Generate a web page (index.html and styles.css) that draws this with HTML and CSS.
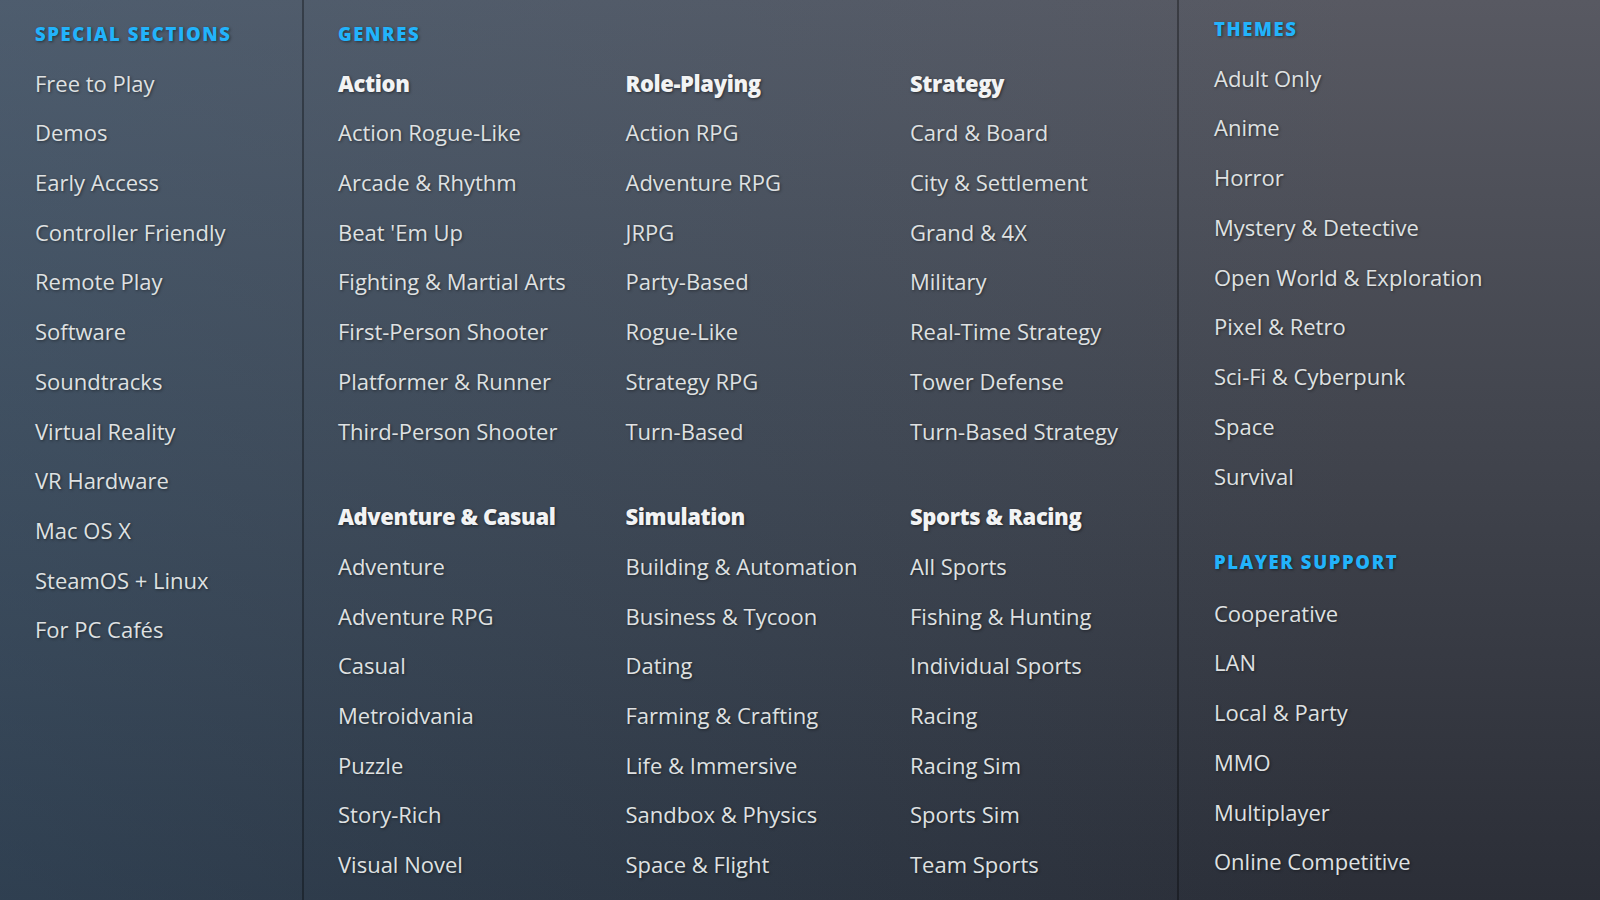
FILE: index.html
```html
<!DOCTYPE html>
<html lang="en">
<head>
<meta charset="utf-8">
<title>Store Menu</title>
<link rel="stylesheet" href="styles.css">
</head>
<body>
<div class="menu">
  <div class="col col-special">
    <div class="section-title">Special Sections</div>
    <ul class="list">
      <li>Free to Play</li>
      <li>Demos</li>
      <li>Early Access</li>
      <li>Controller Friendly</li>
      <li>Remote Play</li>
      <li>Software</li>
      <li>Soundtracks</li>
      <li>Virtual Reality</li>
      <li>VR Hardware</li>
      <li>Mac OS X</li>
      <li>SteamOS + Linux</li>
      <li>For PC Cafés</li>
    </ul>
  </div>
  <div class="col col-genres">
    <div class="section-title">Genres</div>
    <div class="genre-grid">
      <div class="group">
        <div class="group-title">Action</div>
        <ul class="list">
          <li>Action Rogue-Like</li>
          <li>Arcade &amp; Rhythm</li>
          <li>Beat 'Em Up</li>
          <li>Fighting &amp; Martial Arts</li>
          <li>First-Person Shooter</li>
          <li>Platformer &amp; Runner</li>
          <li>Third-Person Shooter</li>
        </ul>
      </div>
      <div class="group">
        <div class="group-title">Role-Playing</div>
        <ul class="list">
          <li>Action RPG</li>
          <li>Adventure RPG</li>
          <li>JRPG</li>
          <li>Party-Based</li>
          <li>Rogue-Like</li>
          <li>Strategy RPG</li>
          <li>Turn-Based</li>
        </ul>
      </div>
      <div class="group">
        <div class="group-title">Strategy</div>
        <ul class="list">
          <li>Card &amp; Board</li>
          <li>City &amp; Settlement</li>
          <li>Grand &amp; 4X</li>
          <li>Military</li>
          <li>Real-Time Strategy</li>
          <li>Tower Defense</li>
          <li>Turn-Based Strategy</li>
        </ul>
      </div>
      <div class="group">
        <div class="group-title">Adventure &amp; Casual</div>
        <ul class="list">
          <li>Adventure</li>
          <li>Adventure RPG</li>
          <li>Casual</li>
          <li>Metroidvania</li>
          <li>Puzzle</li>
          <li>Story-Rich</li>
          <li>Visual Novel</li>
        </ul>
      </div>
      <div class="group">
        <div class="group-title">Simulation</div>
        <ul class="list">
          <li>Building &amp; Automation</li>
          <li>Business &amp; Tycoon</li>
          <li>Dating</li>
          <li>Farming &amp; Crafting</li>
          <li>Life &amp; Immersive</li>
          <li>Sandbox &amp; Physics</li>
          <li>Space &amp; Flight</li>
        </ul>
      </div>
      <div class="group">
        <div class="group-title">Sports &amp; Racing</div>
        <ul class="list">
          <li>All Sports</li>
          <li>Fishing &amp; Hunting</li>
          <li>Individual Sports</li>
          <li>Racing</li>
          <li>Racing Sim</li>
          <li>Sports Sim</li>
          <li>Team Sports</li>
        </ul>
      </div>
    </div>
  </div>
  <div class="col col-themes">
    <div class="section-title">Themes</div>
    <ul class="list">
      <li>Adult Only</li>
      <li>Anime</li>
      <li>Horror</li>
      <li>Mystery &amp; Detective</li>
      <li>Open World &amp; Exploration</li>
      <li>Pixel &amp; Retro</li>
      <li>Sci-Fi &amp; Cyberpunk</li>
      <li>Space</li>
      <li>Survival</li>
    </ul>
    <div class="section-title section-gap">Player Support</div>
    <ul class="list">
      <li>Cooperative</li>
      <li>LAN</li>
      <li>Local &amp; Party</li>
      <li>MMO</li>
      <li>Multiplayer</li>
      <li>Online Competitive</li>
    </ul>
  </div>
</div>
</body>
</html>
```

FILE: styles.css
```css
html, body {
  margin: 0;
  padding: 0;
  height: 100%;
  overflow: hidden;
}

body {
  font-family: "Open Sans", "Noto Sans", sans-serif;
  color: #dfe1e2;
  background-color: #3b4350;
  background-image:
    linear-gradient(to right, rgba(56, 100, 135, 0.32) 0%, rgba(56, 100, 135, 0.16) 45%, rgba(56, 100, 135, 0) 85%),
    linear-gradient(to bottom, #585962 0%, #43464f 45%, #2b2e37 100%);
}

.menu {
  display: flex;
  height: 900px;
  box-sizing: border-box;
}

.col {
  box-sizing: border-box;
  padding-top: 9px;
}

.col-special {
  width: 302px;
  padding-left: 35px;
}

.col-genres {
  width: 875px;
  padding-left: 34px;
  border-left: 2px solid rgba(0, 0, 0, 0.32);
}

.col-themes {
  flex: 1;
  padding-top: 4px;
  padding-left: 35px;
  border-left: 2px solid rgba(0, 0, 0, 0.32);
}

.section-title {
  height: 49.7px;
  line-height: 49.7px;
  font-size: 18.5px;
  font-weight: 800;
  letter-spacing: 1.6px;
  text-transform: uppercase;
  color: #22b3fb;
  text-shadow: 1px 1px 3px rgba(0, 0, 0, 0.45);
}

.section-gap {
  margin-top: 36px;
  margin-bottom: 1.5px;
}

.list {
  list-style: none;
  margin: 0;
  padding: 0;
}

.list li {
  height: 49.7px;
  line-height: 49.7px;
  font-size: 22px;
  white-space: nowrap;
  text-shadow: 1px 1px 3px rgba(0, 0, 0, 0.45);
}

.col-themes .list li {
  height: 49.76px;
  line-height: 49.76px;
}

.genre-grid {
  display: grid;
  grid-template-columns: 287.5px 284.5px 1fr;
  row-gap: 36px;
}

.group-title {
  height: 49.7px;
  line-height: 49.7px;
  font-size: 22px;
  font-weight: 800;
  letter-spacing: -0.4px;
  color: #f2f3f4;
  white-space: nowrap;
  text-shadow: 1px 1px 3px rgba(0, 0, 0, 0.5);
}
```
